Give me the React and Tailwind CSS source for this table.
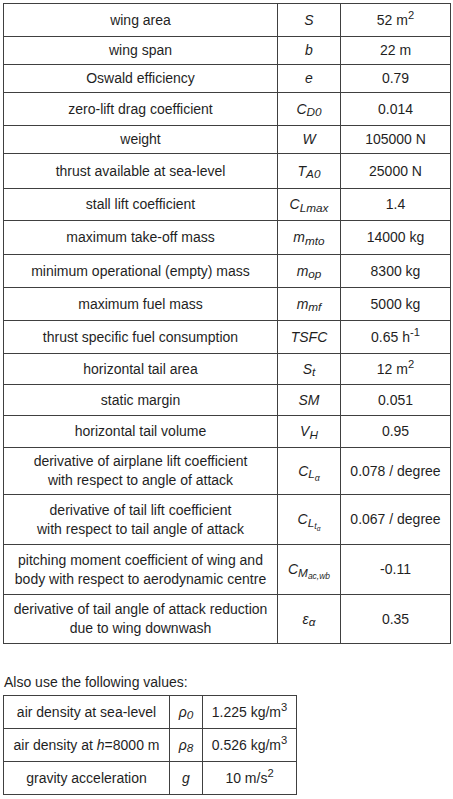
import React from "react";

const Sub = ({ children }) => <sub className="text-[84%]">{children}</sub>;
const Sup = ({ children }) => <sup className="text-[80%]">{children}</sup>;

const rows = [
  ["wing area", <>S</>, <>52 m<Sup>2</Sup></>, 33],
  ["wing span", <>b</>, <>22 m</>, 28],
  ["Oswald efficiency", <>e</>, <>0.79</>, 28],
  ["zero-lift drag coefficient", <>C<Sub>D0</Sub></>, <>0.014</>, 33],
  ["weight", <>W</>, <>105000 N</>, 28],
  ["thrust available at sea-level", <>T<Sub>A0</Sub></>, <>25000 N</>, 35],
  ["stall lift coefficient", <>C<Sub>Lmax</Sub></>, <>1.4</>, 32],
  ["maximum take-off mass", <>m<Sub>mto</Sub></>, <>14000 kg</>, 34],
  ["minimum operational (empty) mass", <>m<Sub>op</Sub></>, <>8300 kg</>, 33],
  ["maximum fuel mass", <>m<Sub>mf</Sub></>, <>5000 kg</>, 33],
  ["thrust specific fuel consumption", <>TSFC</>, <>0.65 h<Sup>-1</Sup></>, 33],
  ["horizontal tail area", <>S<Sub>t</Sub></>, <>12 m<Sup>2</Sup></>, 31],
  ["static margin", <>SM</>, <>0.051</>, 31],
  ["horizontal tail volume", <>V<Sub>H</Sub></>, <>0.95</>, 32],
  [
    <>derivative of airplane lift coefficient<br />with respect to angle of attack</>,
    <>C<sub className="text-[84%]">L<sub className="text-[75%]">α</sub></sub></>,
    <>0.078 / degree</>,
    47,
  ],
  [
    <>derivative of tail lift coefficient<br />with respect to tail angle of attack</>,
    <>C<sub className="text-[84%]">L<sub className="text-[75%]">t<sub className="text-[75%]">α</sub></sub></sub></>,
    <>0.067 / degree</>,
    50,
  ],
  [
    <>pitching moment coefficient of wing and<br />body with respect to aerodynamic centre</>,
    <>C<sub className="text-[84%]">M<sub className="text-[72%]">ac,wb</sub></sub></>,
    <>-0.11</>,
    50,
  ],
  [
    <>derivative of tail angle of attack reduction<br />due to wing downwash</>,
    <>ε<Sub>α</Sub></>,
    <>0.35</>,
    49,
  ],
];

const rows2 = [
  ["air density at sea-level", <>ρ<Sub>0</Sub></>, <>1.225 kg/m<Sup>3</Sup></>],
  [<>air density at <i>h</i>=8000 m</>, <>ρ<Sub>8</Sub></>, <>0.526 kg/m<Sup>3</Sup></>],
  ["gravity acceleration", <>g</>, <>10 m/s<Sup>2</Sup></>],
];

const cell = "border border-[#404040] text-center align-middle px-1";

export default function App() {
  return (
    <div
      className="bg-white text-[#1f1f1f] text-[14px] leading-[19px] pt-[3px] pl-[3px]"
      style={{ fontFamily: '"Liberation Sans", Arial, sans-serif' }}
    >
      <table className="border-collapse table-fixed w-[447px]">
        <colgroup>
          <col className="w-[274px]" />
          <col className="w-[63px]" />
          <col className="w-[110px]" />
        </colgroup>
        <tbody>
          {rows.map((r, i) => (
            <tr key={i} style={{ height: r[3] }}>
              <td className={cell}>{r[0]}</td>
              <td className={cell + " italic"}>{r[1]}</td>
              <td className={cell}>{r[2]}</td>
            </tr>
          ))}
        </tbody>
      </table>
      <div className="pt-[29px] pb-[6px] pl-[1px] h-[51px]">Also use the following values:</div>
      <table className="border-collapse table-fixed w-[293px]">
        <colgroup>
          <col className="w-[166px]" />
          <col className="w-[33px]" />
          <col className="w-[94px]" />
        </colgroup>
        <tbody>
          {rows2.map((r, i) => (
            <tr key={i} className="h-[33px]">
              <td className={cell}>{r[0]}</td>
              <td className={cell + " italic"}>{r[1]}</td>
              <td className={cell}>{r[2]}</td>
            </tr>
          ))}
        </tbody>
      </table>
    </div>
  );
}
